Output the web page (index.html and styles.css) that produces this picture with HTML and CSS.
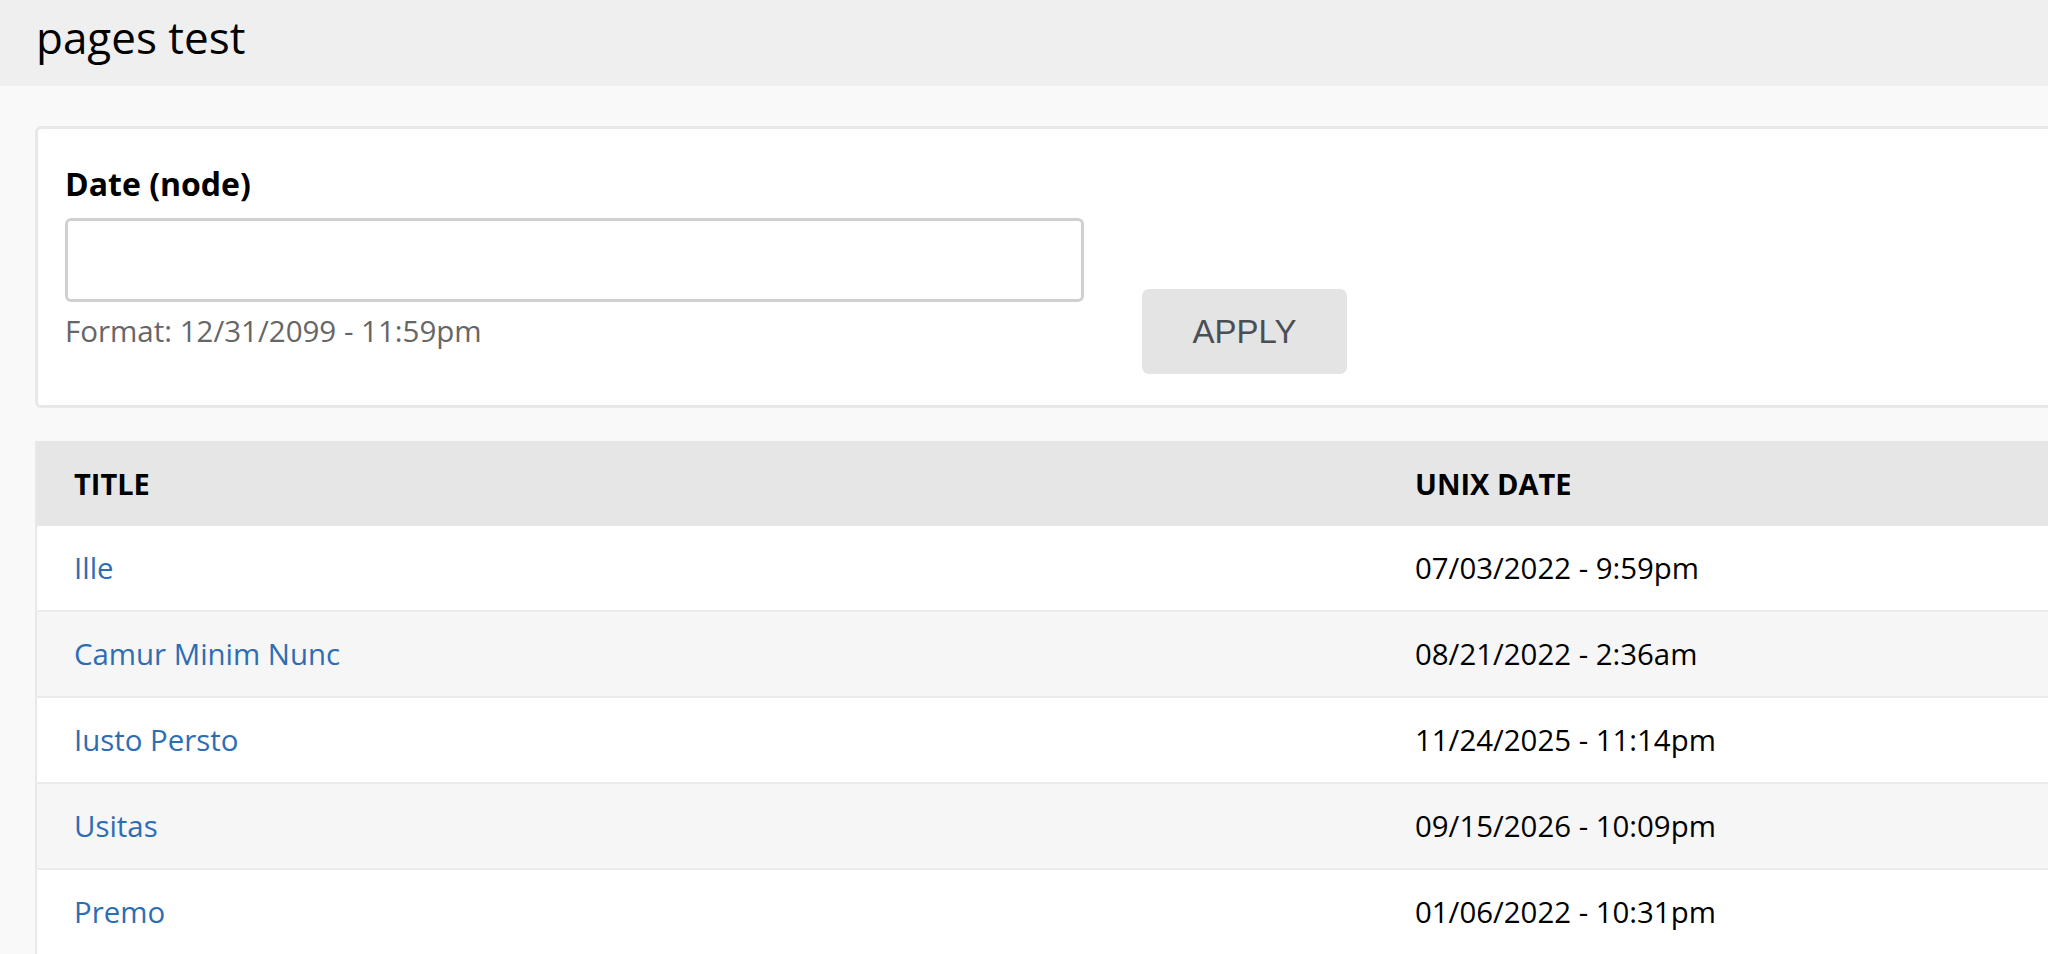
FILE: index.html
```html
<!DOCTYPE html>
<html lang="en">
<head>
<meta charset="utf-8">
<title>pages test</title>
<link rel="stylesheet" href="styles.css">
</head>
<body>
<header class="page-header">
  <h1 class="page-title">pages test</h1>
</header>
<main class="content">
  <form class="filter-box">
    <div class="form-item">
      <label class="form-label" for="date-node">Date (node)</label>
      <input class="form-input" id="date-node" type="text">
      <div class="form-description">Format: 12/31/2099 - 11:59pm</div>
    </div>
    <div class="form-actions">
      <button class="apply-btn" type="button">APPLY</button>
    </div>
  </form>
  <table class="views-table">
    <colgroup>
      <col class="col-title">
      <col class="col-date">
    </colgroup>
    <thead>
      <tr><th>TITLE</th><th>UNIX DATE</th></tr>
    </thead>
    <tbody>
      <tr><td><a href="#">Ille</a></td><td>07/03/2022 - 9:59pm</td></tr>
      <tr><td><a href="#">Camur Minim Nunc</a></td><td>08/21/2022 - 2:36am</td></tr>
      <tr><td><a href="#">Iusto Persto</a></td><td>11/24/2025 - 11:14pm</td></tr>
      <tr><td><a href="#">Usitas</a></td><td>09/15/2026 - 10:09pm</td></tr>
      <tr><td><a href="#">Premo</a></td><td>01/06/2022 - 10:31pm</td></tr>
    </tbody>
  </table>
</main>
</body>
</html>
```

FILE: styles.css
```css
html, body {
  margin: 0;
  padding: 0;
  overflow: hidden;
}
body {
  background: #f9f9f9;
  font-family: "Open Sans", "Noto Sans", sans-serif;
  color: #000;
}
.page-header {
  box-sizing: border-box;
  height: 86px;
  background: #efefef;
  padding: 7px 0 0 36px;
}
.page-title {
  margin: 0;
  font-size: 44px;
  font-weight: 400;
  line-height: normal;
}
.content {
  width: 2200px;
  padding: 40px 0 0 35px;
}
.filter-box {
  display: flex;
  align-items: flex-start;
  background: #fff;
  border: 3px solid #e8e8e8;
  border-radius: 6px;
  padding: 33px 26px 31px 27px;
  margin: 0 0 33px 0;
}
.form-item {
  display: flex;
  flex-direction: column;
  width: 1019px;
}
.form-label {
  font-size: 32px;
  font-weight: 700;
  line-height: normal;
  margin-bottom: 13px;
}
.form-input {
  box-sizing: border-box;
  height: 84px;
  width: 1019px;
  border: 3px solid #d0d0d0;
  border-radius: 6px;
  background: #fff;
  margin: 0;
}
.form-description {
  font-size: 29.5px;
  line-height: normal;
  color: #666;
  margin-top: 8px;
}
.form-actions {
  margin: 127px 0 0 58px;
}
.apply-btn {
  display: block;
  box-sizing: border-box;
  width: 205px;
  height: 85px;
  border: 0;
  border-radius: 7px;
  background: #e4e4e4;
  color: #4a4f56;
  font-family: "Liberation Sans", Arial, sans-serif;
  font-size: 33px;
  padding: 0;
}
.views-table {
  width: 2160px;
  table-layout: fixed;
  border-collapse: collapse;
  border-left: 2px solid #e8e8e8;
}
.col-title { width: 1342px; }
.views-table th {
  background: #e6e6e6;
  height: 85px;
  padding: 0 0 0 37px;
  text-align: left;
  font-size: 29px;
  font-weight: 700;
  vertical-align: middle;
}
.views-table td {
  height: 84px;
  padding: 0 0 0 37px;
  font-size: 29.4px;
  vertical-align: middle;
  border-bottom: 2px solid #ebebeb;
  background: #fff;
}
.views-table tbody tr:nth-child(even) td {
  background: #f6f6f6;
}
.views-table a {
  color: #2c6db4;
  text-decoration: none;
}
```
